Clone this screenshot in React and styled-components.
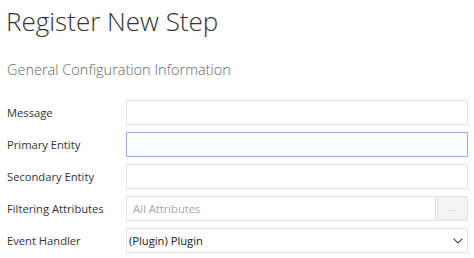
import React from "react";
import styled, { createGlobalStyle } from "styled-components";

const GlobalStyle = createGlobalStyle`
  html, body {
    margin: 0;
    padding: 0;
    background: #ffffff;
  }
  body {
    font-family: "Open Sans", "Noto Sans", sans-serif;
    color: #333333;
  }
`;

const Page = styled.div`
  width: 474px;
  height: 258px;
  box-sizing: border-box;
  padding: 4px 6px 0 6px;
  overflow: hidden;
`;

const Title = styled.h1`
  margin: 0;
  font-size: 26px;
  font-weight: 300;
  line-height: 34px;
  color: #333333;
`;

const SectionTitle = styled.h2`
  margin: 21px 0 0 1px;
  font-size: 14.5px;
  font-weight: 300;
  line-height: 22px;
  color: #666666;
`;

const Form = styled.div`
  display: grid;
  grid-template-columns: 120px 1fr;
  row-gap: 7px;
  margin-top: 19px;
`;

const Label = styled.label`
  display: flex;
  align-items: center;
  padding-left: 1px;
  font-size: 11.2px;
  color: #333333;
  height: 25px;
`;

const Field = styled.div`
  box-sizing: border-box;
  height: 25px;
  border: 1px solid ${(p) => (p.focused ? "#8fb5df" : "#e2e2e2")};
  background: ${(p) => (p.focused ? "#fdfeff" : "#ffffff")};
  display: flex;
  align-items: center;
  padding: 0 ${(p) => (p.placeholder ? "6px" : "2px")};
  font-size: 11.2px;
  color: ${(p) => (p.placeholder ? "#a6a6a6" : "#222222")};
  flex: 1;
`;

const Row = styled.div`
  display: flex;
  gap: 1px;
`;

const DotsButton = styled.div`
  box-sizing: border-box;
  width: 31px;
  height: 25px;
  border: 1px solid #e2e2e2;
  background: #f3f3f3;
  color: #c8c8c8;
  font-size: 9px;
  display: flex;
  align-items: flex-end;
  justify-content: center;
  padding-bottom: 6px;
`;

const Select = styled(Field)`
  justify-content: space-between;
  padding-right: 4px;
`;

const Chevron = () => (
  <svg width="10" height="6" viewBox="0 0 10 6">
    <path d="M0.6 0.6 L5 5 L9.4 0.6" fill="none" stroke="#444" strokeWidth="1.1" />
  </svg>
);

export default function App() {
  return (
    <>
      <GlobalStyle />
      <Page>
        <Title>Register New Step</Title>
        <SectionTitle>General Configuration Information</SectionTitle>
        <Form>
          <Label>Message</Label>
          <Field />
          <Label>Primary Entity</Label>
          <Field focused />
          <Label>Secondary Entity</Label>
          <Field />
          <Label>Filtering Attributes</Label>
          <Row>
            <Field placeholder>All Attributes</Field>
            <DotsButton>...</DotsButton>
          </Row>
          <Label>Event Handler</Label>
          <Select>
            <span>(Plugin) Plugin</span>
            <Chevron />
          </Select>
        </Form>
      </Page>
    </>
  );
}
